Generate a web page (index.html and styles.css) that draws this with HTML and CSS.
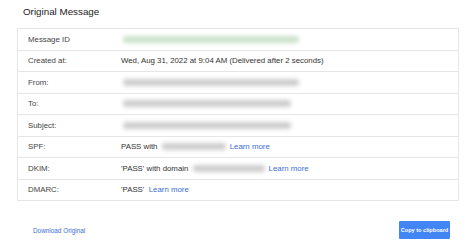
FILE: index.html
```html
<!DOCTYPE html>
<html>
<head>
<meta charset="utf-8">
<link rel="stylesheet" href="styles.css">
</head>
<body>
<div class="page">
  <h1 class="title">Original Message</h1>
  <div class="table">
    <div class="row"><div class="label">Message ID</div><div class="value"><span class="blur green" style="width:176px"></span></div></div>
    <div class="row"><div class="label">Created at:</div><div class="value">Wed, Aug 31, 2022 at 9:04 AM (Delivered after 2 seconds)</div></div>
    <div class="row"><div class="label">From:</div><div class="value"><span class="blur" style="width:176px"></span></div></div>
    <div class="row"><div class="label">To:</div><div class="value"><span class="blur" style="width:168px"></span></div></div>
    <div class="row"><div class="label">Subject:</div><div class="value"><span class="blur" style="width:168px"></span></div></div>
    <div class="row"><div class="label">SPF:</div><div class="value">PASS with <span class="blur" style="width:64px"></span> <a class="link">Learn more</a></div></div>
    <div class="row"><div class="label">DKIM:</div><div class="value">'PASS' with domain <span class="blur" style="width:72px"></span> <a class="link">Learn more</a></div></div>
    <div class="row"><div class="label">DMARC:</div><div class="value">'PASS' &nbsp;<a class="link">Learn more</a></div></div>
  </div>
  <div class="footer">
    <a class="download">Download Original</a>
    <button class="copy">Copy to clipboard</button>
  </div>
</div>
</body>
</html>
```
FILE: styles.css
```css
html, body { margin: 0; padding: 0; background: #fff; }
body { font-family: "Liberation Sans", Arial, sans-serif; color: #333; }
.page { padding: 5px 14px 0 17px; }
.title { margin: 0 0 0 6px; font-size: 9.8px; font-weight: normal; color: #222; line-height: 14px; height: 23px; }
.table { border: 1px solid #e6e6e6; width: 442px; box-sizing: border-box; }
.row { display: flex; align-items: center; height: 21.5px; border-top: 1px solid #e6e6e6; box-sizing: border-box; font-size: 7.85px; }
.row:first-child { border-top: none; height: 20.5px; }
.label { width: 93px; padding-left: 10px; color: #444; }
.value { flex: 1; color: #333; display: flex; align-items: center; white-space: pre; }
.blur { display: inline-block; height: 7px; background: #cdcdcd; filter: blur(2.2px); border-radius: 3px; margin: 0 4px 0 2px; }
.blur.green { background: #cbe2cb; }
.link { color: #3b6fd4; }
.footer { display: flex; justify-content: space-between; align-items: center; margin-top: 20px; padding: 0 10px 0 16px; }
.download { font-size: 6.4px; color: #3b6fd4; }
.copy { background: #4285f4; color: #fff; border: none; font-family: "Liberation Sans", Arial, sans-serif; font-weight: bold; font-size: 5.6px; width: 51px; height: 18px; padding: 0; border-radius: 1px; }
```
